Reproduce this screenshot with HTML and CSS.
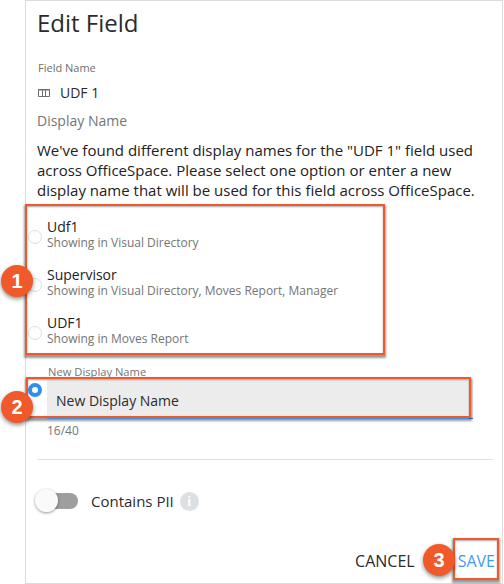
FILE: index.html
```html
<!DOCTYPE html>
<html lang="en">
<head>
<meta charset="utf-8">
<title>Edit Field</title>
<link rel="stylesheet" href="styles.css">
</head>
<body>
<main class="card">
  <h1 class="title">Edit Field</h1>
  <div class="field-label">Field Name</div>
  <div class="field-value">
    <svg class="col-icon" width="12" height="10" viewBox="0 0 12 10"><path d="M.5 1.5h11v7H.5zM4.5 1.5v7M7.5 1.5v7" fill="none" stroke="#6e6e6e" stroke-width="1"/><path d="M.5 2h11" stroke="#6e6e6e" stroke-width="1"/></svg>
    <span>UDF 1</span>
  </div>
  <div class="section-label">Display Name</div>
  <p class="desc">We've found different display names for the "UDF 1" field used across OfficeSpace. Please select one option or enter a new display name that will be used for this field across OfficeSpace.</p>
  <div class="options">
    <div class="option"><span class="radio"></span><div class="opt-name">Udf1</div><div class="opt-sub">Showing in Visual Directory</div></div>
    <div class="option"><span class="radio"></span><div class="opt-name">Supervisor</div><div class="opt-sub">Showing in Visual Directory, Moves Report, Manager</div></div>
    <div class="option"><span class="radio"></span><div class="opt-name">UDF1</div><div class="opt-sub">Showing in Moves Report</div></div>
  </div>
  <div class="new-name">
    <span class="radio radio-on"></span>
    <div class="input-label">New Display Name</div>
    <div class="input">New Display Name</div>
    <div class="counter">16/40</div>
  </div>
  <hr class="divider">
  <div class="pii">
    <span class="toggle"><span class="knob"></span></span>
    <span class="pii-label">Contains PII</span>
    <span class="info">i</span>
  </div>
  <div class="actions">
    <span class="btn">CANCEL</span>
    <span class="btn btn-save">SAVE</span>
  </div>
</main>
<div class="mark mark-1"></div>
<div class="mark mark-2"></div>
<div class="mark mark-3"></div>
<div class="badge badge-1">1</div>
<div class="badge badge-2">2</div>
<div class="badge badge-3">3</div>
</body>
</html>
```
FILE: styles.css
```css
* { box-sizing: border-box; }
html, body { margin: 0; padding: 0; }
body {
  position: relative;
  width: 504px;
  height: 584px;
  overflow: hidden;
  background: #fff;
  font-family: "Open Sans", sans-serif;
  color: #2b2b2b;
}
.card {
  margin-left: 25px;
  width: 478px;
  height: 584px;
  border: 1px solid #dcdcdc;
  padding: 0 9px 0 11px;
  display: flex;
  flex-direction: column;
}
.title {
  margin: 5px 0 0 0;
  font-size: 24px;
  line-height: 33px;
  font-weight: 400;
}
.field-label {
  margin: 21px 0 0 1px;
  font-size: 11px;
  line-height: 15px;
  color: #6f6f6f;
}
.field-value {
  margin: 8px 0 0 1px;
  display: flex;
  align-items: center;
  gap: 10px;
  font-size: 14px;
  line-height: 20px;
}
.section-label {
  margin-top: 8px;
  font-size: 14px;
  line-height: 20px;
  color: #757575;
}
.desc {
  margin: 9px 0 0;
  font-size: 15px;
  line-height: 20px;
  color: #222;
  width: 440px;
}
.options {
  margin-top: 17px;
  display: flex;
  flex-direction: column;
  gap: 10px;
}
.option {
  position: relative;
  padding: 1px 0 0 10px;
  height: 38px;
}
.opt-name { font-size: 14px; line-height: 18px; color: #222; }
.opt-sub { font-size: 12px; line-height: 13px; color: #757575; }
.radio {
  position: absolute;
  left: -9px;
  top: 13px;
  width: 14px;
  height: 14px;
  border-radius: 50%;
  border: 1.5px solid #dedede;
  background: #fff;
}
.new-name {
  position: relative;
  margin-top: 13px;
  padding-left: 10px;
}
.radio-on {
  top: 19px;
  border: 4px solid #2e8fef;
}
.input-label {
  padding-left: 1px;
  font-size: 11.2px;
  line-height: 15px;
  color: #757575;
}
.input {
  margin-top: 1px;
  height: 38.5px;
  width: 426px;
  padding: 11px 0 0 9px;
  background: #ececec;
  border-bottom: 1.5px solid #3f8fe0;
  font-size: 14px;
  line-height: 20px;
  color: #2b2b2b;
}
.counter {
  margin-top: 4.5px;
  font-size: 12px;
  line-height: 16px;
  color: #757575;
}
.divider {
  margin: 20px 0 0;
  width: 456px;
  border: 0;
  border-top: 1px solid #e0e0e0;
}
.pii {
  margin-top: 29px;
  display: flex;
  align-items: center;
  height: 24px;
}
.toggle {
  position: relative;
  width: 41px;
  height: 16px;
  border-radius: 8px;
  background: #9e9e9e;
}
.knob {
  position: absolute;
  left: -2px;
  top: -4px;
  width: 23px;
  height: 23px;
  border-radius: 50%;
  background: #fafafa;
  box-shadow: 0 1px 3px rgba(0,0,0,.4);
}
.pii-label {
  margin-left: 13px;
  font-size: 15px;
  line-height: 20px;
}
.info {
  margin-left: 6px;
  width: 19px;
  height: 19px;
  border-radius: 50%;
  background: #dde0e2;
  color: #fff;
  font-size: 13px;
  font-weight: 700;
  line-height: 19px;
  text-align: center;
}
.actions {
  margin: 38px -2px 0 0;
  display: flex;
  justify-content: flex-end;
  gap: 43px;
}
.btn {
  font-size: 16px;
  line-height: 20px;
  color: #2b2b2b;
}
.btn-save { color: #3f9bf2; }
.mark {
  position: absolute;
  border: 2.5px solid #f0592a;
  box-shadow: 0 2px 2px 1px rgba(0,0,0,.4), inset 0 1px 2px rgba(0,0,0,.35);
}
.mark-1 { left: 25px; top: 204px; width: 360px; height: 151px; }
.mark-2 { left: 26px; top: 377px; width: 445px; height: 41px; }
.mark-2::after {
  content: "";
  position: absolute;
  left: 18.5px;
  right: 0;
  bottom: -2.5px;
  height: 2px;
  background: #3f8fe0;
}
.mark-3 { left: 453px; top: 538px; width: 46px; height: 42px; }
.badge {
  position: absolute;
  width: 32px;
  height: 32px;
  border-radius: 50%;
  background: #f0592a;
  color: #fff;
  font-family: "Liberation Sans", sans-serif;
  font-size: 20px;
  font-weight: 700;
  line-height: 32px;
  text-align: center;
  box-shadow: 0 2px 4px rgba(0,0,0,.45);
}
.badge-1 { left: 1px; top: 265px; }
.badge-2 { left: 1px; top: 391px; }
.badge-3 { left: 423px; top: 544px; }
```
